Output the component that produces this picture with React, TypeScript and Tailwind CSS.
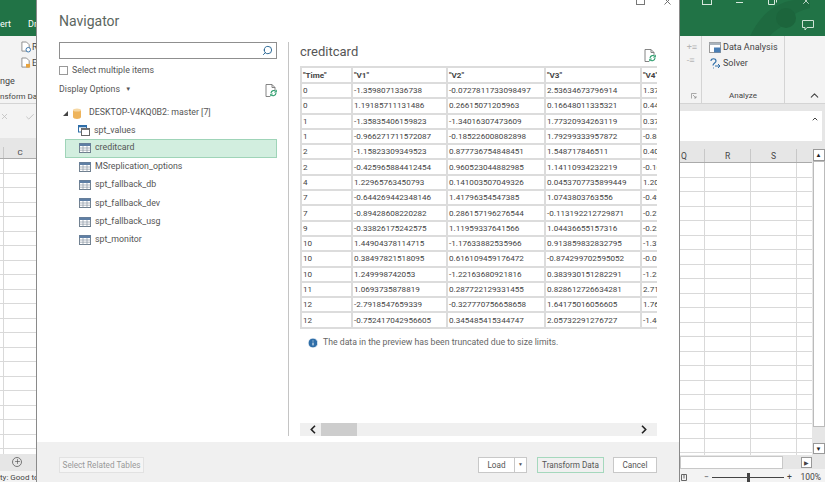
import { ReactNode } from "react";
import { ChevronUp, X, Check, Plus, Search, Info } from "lucide-react";

const font = "font-['Roboto','Noto_Sans',sans-serif]";

const columns = [
  { name: '"Time"', width: "w-[51px]" },
  { name: '"V1"', width: "w-[95px]" },
  { name: '"V2"', width: "w-[98px]" },
  { name: '"V3"', width: "w-[96px]" },
  { name: '"V4"', width: "w-[40px]" },
];

const rows = [
  ["0", "-1.3598071336738", "-0.0727811733098497", "2.53634673796914", "1.378"],
  ["0", "1.19185711131486", "0.26615071205963", "0.16648011335321", "0.448"],
  ["1", "-1.35835406159823", "-1.34016307473609", "1.77320934263119", "0.379"],
  ["1", "-0.966271711572087", "-0.185226008082898", "1.79299333957872", "-0.863"],
  ["2", "-1.15823309349523", "0.877736754848451", "1.548717846511", "0.403"],
  ["2", "-0.425965884412454", "0.960523044882985", "1.14110934232219", "-0.168"],
  ["4", "1.22965763450793", "0.141003507049326", "0.0453707735899449", "1.202"],
  ["7", "-0.644269442348146", "1.41796354547385", "1.0743803763556", "-0.492"],
  ["7", "-0.89428608220282", "0.286157196276544", "-0.113192212729871", "-0.271"],
  ["9", "-0.33826175242575", "1.11959337641566", "1.04436655157316", "-0.227"],
  ["10", "1.44904378114715", "-1.17633882535966", "0.913859832832795", "-1.378"],
  ["10", "0.38497821518095", "0.616109459176472", "-0.874299702595052", "-0.094"],
  ["10", "1.249998742053", "-1.22163680921816", "0.383930151282291", "-1.235"],
  ["11", "1.0693735878819", "0.287722129331455", "0.828612726634281", "2.716"],
  ["12", "-2.7918547659339", "-0.327770756658658", "1.64175016056605", "1.768"],
  ["12", "-0.752417042956605", "0.345485415344747", "2.05732291276727", "-1.466"],
];

const tables = ["creditcard", "MSreplication_options", "spt_fallback_db", "spt_fallback_dev", "spt_fallback_usg", "spt_monitor"];

function TableIcon() {
  return (
    <svg width="12" height="10" viewBox="0 0 12 10" className="shrink-0">
      <rect x="0.5" y="0.5" width="11" height="9" fill="#fff" stroke="#6f7f8f" />
      <rect x="0.5" y="0.5" width="11" height="2.5" fill="#5f7fa5" />
      <path d="M4 3v6.5M8 3v6.5M0.5 5h11M0.5 7.2h11" stroke="#8a96a3" strokeWidth="0.7" />
    </svg>
  );
}

function ViewIcon() {
  return (
    <svg width="12" height="11" viewBox="0 0 12 11" className="shrink-0">
      <rect x="0.5" y="0.5" width="8" height="6.5" fill="#fff" stroke="#2f6ea8" />
      <rect x="0.5" y="0.5" width="8" height="1.8" fill="#2f6ea8" />
      <rect x="3.5" y="3.5" width="8" height="7" fill="#fff" stroke="#666" />
      <rect x="3.5" y="3.5" width="8" height="1.5" fill="#777" />
    </svg>
  );
}

function RefreshDoc() {
  return (
    <svg width="12" height="13" viewBox="0 0 12 13">
      <path d="M1 .5h6l3 3v3M7 .5v3h3M5 12.5H1V.5" fill="none" stroke="#777" strokeWidth="0.9" />
      <path d="M11 9a2.8 2.8 0 0 1-5 1.6M6 9a2.8 2.8 0 0 1 5-1.4" fill="none" stroke="#2f9e6e" strokeWidth="1.1" />
      <path d="M11.5 5.8v2.4H9.2M5.6 12.4V10h2.3" fill="none" stroke="#2f9e6e" strokeWidth="0.8" />
    </svg>
  );
}

function GridRows({ count, children }: { count: number; children: ReactNode }) {
  return (
    <div className="flex flex-col flex-1 overflow-hidden bg-white">
      {Array.from({ length: count }).map((_, i) => (
        <div key={i} className="flex h-[14.5px] shrink-0 border-b border-[#d9d9d9]">
          {children}
        </div>
      ))}
    </div>
  );
}

function LeftExcel() {
  return (
    <div className="w-[36px] shrink-0 flex flex-col overflow-hidden bg-[#e6e6e6] text-[#444]">
      <div className="h-[36px] bg-[#217346] flex items-end justify-between pb-[5px] text-white text-[9px] whitespace-nowrap">
        <span>ert</span>
        <span className="-mr-[1px]">Dr</span>
      </div>
      <div className="h-[68px] bg-[#f3f3f3] flex flex-col items-end whitespace-nowrap border-b border-[#d4d4d4]">
        <div className="w-full pl-[21px] pt-[5px] flex flex-col gap-[4px]">
          <div className="flex items-center gap-[1px]">
            <svg width="10" height="12" viewBox="0 0 11 12" className="shrink-0">
              <path d="M1 .5h5l3 3v7H1z" fill="#fff" stroke="#888" />
              <circle cx="8" cy="9" r="2.5" fill="#fff" stroke="#2f6ea8" />
            </svg>
            <span className="text-[9px] leading-[12px]">R</span>
          </div>
          <div className="flex items-center gap-[1px]">
            <svg width="10" height="12" viewBox="0 0 11 12" className="shrink-0">
              <path d="M1 .5h5l3 3v7H1z" fill="#fff" stroke="#888" />
              <rect x="5.5" y="7" width="4.5" height="4" fill="#e8a33d" />
            </svg>
            <span className="text-[9px] leading-[12px]">E</span>
          </div>
        </div>
        <div className="w-full text-[9px] leading-[12px] mt-[6px]">nge</div>
        <div className="w-full text-[8px] leading-[10px] mt-[5px]">nsform Da</div>
      </div>
      <div className="h-[34px] flex items-start pt-[8px] bg-[#f3f3f3] text-[#bbb]">
        <X size={9} />
        <Check size={10} className="ml-[16px]" />
      </div>
      <div className="h-[10px] bg-[#e6e6e6]" />
      <div className="h-[12px] -mt-[1px] flex bg-[#e6e6e6] border-b border-[#aaa] text-[8px] leading-[12px]">
        <div className="w-[4px] border-r border-[#c8c8c8]" />
        <div className="flex-1 text-center">C</div>
      </div>
      <GridRows count={21}>
        <div className="w-[4px] border-r border-[#d9d9d9]" />
      </GridRows>
      <div className="h-[17px] bg-[#e6e6e6] flex items-center justify-end pr-[14px] pb-[2px]">
        <div className="w-[10px] h-[10px] rounded-full border border-[#777] flex items-center justify-center">
          <Plus size={7} />
        </div>
      </div>
      <div className="h-[11px] bg-[#f3f3f3] text-[8px] leading-[13px] whitespace-nowrap">ty: Good to</div>
    </div>
  );
}

function RightExcel() {
  return (
    <div className="w-[146px] shrink-0 flex flex-col overflow-hidden bg-[#e6e6e6] text-[#444] border-l border-[#8a8a8a]">
      <div className="h-[36px] bg-[#217346] relative overflow-hidden text-white">
        <svg width="60" height="36" viewBox="0 0 60 36" className="absolute left-[70px] top-0">
          <path d="M0 36C8 20 20 4 44 0h16v8c-10 2-20 8-24 14-4 6-12 8-16 14z" fill="#1e6a40" />
          <circle cx="36" cy="18" r="10" fill="#1c653c" />
        </svg>
        <div className="relative flex justify-between pl-[22px] pr-[14px] -mt-[4px] items-start">
          <svg width="10" height="9" viewBox="0 0 10 9"><rect x=".5" y=".5" width="9" height="8" fill="none" stroke="#d7e8dd" /></svg>
          <div className="w-[7px] h-[1px] bg-[#d7e8dd] mt-[6px]" />
          <svg width="9" height="9" viewBox="0 0 9 9"><path d="M2 .5h6.5v6M.5 2.5h6v6h-6z" fill="none" stroke="#d7e8dd" /></svg>
          <X size={10} className="text-[#d7e8dd]" />
        </div>
        <svg width="12" height="11" viewBox="0 0 12 11" className="absolute right-[11px] top-[20px]">
          <path d="M.5.5h11v7H5L3 10V7.5H.5z" fill="none" stroke="#cfe3d6" />
        </svg>
      </div>
      <div className="h-[68px] bg-[#f3f3f3] flex border-b border-[#d4d4d4]">
        <div className="w-[22px] border-r border-[#d4d4d4] flex flex-col justify-between items-end pr-[4px] pt-[5px] pb-[4px] text-[#b5b5b5] text-[9px] leading-[13px]">
          <div className="flex flex-col">
            <span>+≡</span>
            <span>-≡</span>
          </div>
          <svg width="6" height="6" viewBox="0 0 6 6"><path d="M.5 5.5v-5h5M2 2l3 3M5 3v2H3" fill="none" stroke="#888" strokeWidth="0.7" /></svg>
        </div>
        <div className="w-[83px] border-r border-[#d4d4d4] flex flex-col pl-[7px] pt-[3px]">
          <div className="flex items-center gap-[2px] text-[9px] leading-[16px] whitespace-nowrap">
            <svg width="12" height="11" viewBox="0 0 12 11" className="shrink-0">
              <rect x=".5" y=".5" width="11" height="10" fill="#fff" stroke="#999" />
              <rect x=".5" y=".5" width="11" height="2.5" fill="#aab4bd" />
              <rect x="5" y="5.5" width="6.5" height="5" fill="#4a7fb5" />
            </svg>
            Data Analysis
          </div>
          <div className="flex items-center gap-[2px] text-[9px] leading-[16px] pl-[1px]">
            <svg width="11" height="11" viewBox="0 0 11 11" className="shrink-0">
              <path d="M1 3c0-3 5-3 5 0 0 2-3 2-3 4.500M3 10h.8" fill="none" stroke="#2f6ea8" strokeWidth="1.2" />
              <path d="M5 8h5M8 6l2 2-2 2" fill="none" stroke="#2f6ea8" strokeWidth="1" />
            </svg>
            Solver
          </div>
          <div className="mt-auto mb-[1px] pr-[7px] text-center text-[8px] leading-[12px]">Analyze</div>
        </div>
        <div className="flex-1 flex items-end justify-end pr-[4px] pb-[1px]">
          <ChevronUp size={13} />
        </div>
      </div>
      <div className="h-[7px]" />
      <div className="h-[30px] bg-white mr-[3px] flex justify-end pr-[3px] pt-[4px]">
        <ChevronUp size={8} strokeWidth={3} />
      </div>
      <div className="h-[8px]" />
      <div className="flex flex-1 min-h-0">
        <div className="flex-1 flex flex-col min-w-0">
          <div className="h-[14px] flex bg-[#e6e6e6] border-b border-[#aaa] text-[8.5px] leading-[14px] text-center">
            <div className="w-[25px] border-r border-[#c8c8c8] text-left pl-[1px]">Q</div>
            <div className="w-[46px] border-r border-[#c8c8c8]">R</div>
            <div className="w-[46px] border-r border-[#c8c8c8]">S</div>
            <div className="flex-1" />
          </div>
          <GridRows count={21}>
            <div className="w-[25px] border-r border-[#d9d9d9]" />
            <div className="w-[46px] border-r border-[#d9d9d9]" />
            <div className="w-[46px] border-r border-[#d9d9d9]" />
          </GridRows>
        </div>
        <div className="w-[13px] shrink-0 flex flex-col items-center text-[#222] text-[6px] leading-[10px]">
          <div className="w-[12px] h-[12px] bg-white border border-[#999] text-center">▲</div>
          <div className="w-[12px] h-[266px] bg-white border border-[#bbb]" />
          <div className="flex-1" />
          <div className="w-[12px] h-[11px] mb-[1px] bg-white border border-[#999] text-center">▼</div>
        </div>
      </div>
      <div className="h-[14px] flex items-center pr-[13px]">
        <div className="w-[103px] h-[13px] bg-white border border-[#c8c8c8]" />
        <div className="w-[11px] h-[11px] ml-auto bg-white border border-[#999] text-center text-[6px] leading-[9px]">▶</div>
      </div>
      <div className="h-[13px] flex items-center bg-[#f3f3f3] text-[8.5px] pl-[1px] pr-[4px] pt-[3px]">
        <svg width="6" height="7" viewBox="0 0 6 7"><path d="M.5.5h5v6h-5zM3 .5v4" fill="none" stroke="#666" /></svg>
        <span className="ml-[17px]">−</span>
        <div className="ml-[3px] w-[72px] h-[1px] bg-[#444] relative">
          <div className="absolute left-[35px] -top-[4px] w-[3px] h-[9px] bg-[#444]" />
        </div>
        <span className="ml-[3px]">+</span>
        <span className="ml-auto">100%</span>
      </div>
    </div>
  );
}

function TreePane() {
  return (
    <div className="w-[240px] shrink-0 pl-[22px] flex flex-col text-[8.8px] text-[#555]">
      <div className="h-[17px] border border-[#8f8f8f] bg-white flex items-center justify-end pr-[3px]">
        <Search size={11} className="text-[#1f5f8f] -scale-x-100" />
      </div>
      <div className="flex items-center gap-[4px] mt-[6px] h-[11px]">
        <div className="w-[9px] h-[9px] border border-[#999] bg-white" />
        <span>Select multiple items</span>
      </div>
      <div className="flex items-center mt-[7px] h-[14px] justify-between">
        <span>
          Display Options <span className="ml-[3px] text-[6px] align-[1px]">▼</span>
        </span>
        <RefreshDoc />
      </div>
      <div className="flex items-center mt-[7px] h-[18px] pl-[4px] gap-[5px]">
        <div className="w-0 h-0 border-l-[5px] border-l-transparent border-b-[5px] border-b-[#444]" />
        <svg width="8" height="11" viewBox="0 0 8 11" className="shrink-0">
          <path d="M0 2v7c0 2.5 8 2.5 8 0V2z" fill="#eeb45c" />
          <ellipse cx="4" cy="2" rx="4" ry="1.600" fill="#f6d8a4" />
        </svg>
        <span className="ml-[3px] whitespace-nowrap">DESKTOP-V4KQ0B2: master [7]</span>
      </div>
      <div className="flex items-center h-[16.5px] pl-[19px] gap-[4px]">
        <ViewIcon />
        <span>spt_values</span>
      </div>
      {tables.map((name, i) => (
        <div
          key={name}
          className={
            i === 0
              ? "flex items-center h-[19px] ml-[6px] pl-[13px] gap-[4px] bg-[#d2eedf] border border-[#9fd4b8]"
              : "flex items-center h-[18.3px] ml-[6px] pl-[14px] gap-[4px]"
          }
        >
          <TableIcon />
          <span>{name}</span>
        </div>
      ))}
    </div>
  );
}

function PreviewPane() {
  return (
    <div className="w-[369px] ml-[11px] h-[394px] border-l border-[#c4c4c4] pl-[11px] flex flex-col">
      <div className="flex items-center justify-between h-[24px] pr-[1px]">
        <span className="text-[13px] leading-[20px] text-[#555] -mt-[5px]">creditcard</span>
        <div className="mt-[2px]"><RefreshDoc /></div>
      </div>
      <div className="w-[357px] overflow-hidden">
        <table className="table-fixed border-collapse w-[380px] text-[8.1px] text-[#444]">
          <thead>
            <tr className="h-[16px] bg-white">
              {columns.map((col) => (
                <th key={col.name} className={`${col.width} border-2 border-[#dcdcdc] text-left font-bold pl-[1px] py-0 leading-[12px]`}>
                  {col.name}
                </th>
              ))}
            </tr>
          </thead>
          <tbody>
            {rows.map((row, i) => (
              <tr key={i} className="h-[15.3px]">
                {row.map((cell, j) => (
                  <td key={j} className="border-2 border-[#dcdcdc] pl-[1px] py-0 leading-[11px] whitespace-nowrap overflow-hidden">
                    {cell}
                  </td>
                ))}
              </tr>
            ))}
          </tbody>
        </table>
      </div>
      <div className="flex items-center gap-[4px] mt-[7px] pl-[7px] h-[14px]">
        <Info size={12} className="text-white fill-[#2f6ea8]" />
        <span className="text-[8.7px] text-[#666]">The data in the preview has been truncated due to size limits.</span>
      </div>
      <div className="mt-auto w-[357px] h-[13px] bg-[#f0f0f0] flex items-center justify-between px-[10px] text-[#222]">
        <svg width="6" height="9" viewBox="0 0 6 9"><path d="M5 .8 1.300 4.500 5 8.200" fill="none" stroke="#222" strokeWidth="1.6" /></svg>
        <div className="w-[36px] h-[13px] bg-[#cdcdcd] mr-auto ml-[5px]" />
        <svg width="6" height="9" viewBox="0 0 6 9"><path d="M1 .8l3.700 3.700L1 8.200" fill="none" stroke="#222" strokeWidth="1.6" /></svg>
      </div>
    </div>
  );
}

function Dialog() {
  return (
    <div className="w-[643px] shrink-0 flex flex-col bg-white border-l border-[#8a8a8a]">
      <div className="h-[42px] relative pl-[22px] pt-[11px] text-[14px] leading-[20px] text-[#5b6660]">
        Navigator
        <div className="absolute right-[34px] -top-[4px] w-[9px] h-[9px] border border-[#777]" />
        <X size={11} className="absolute right-[6px] -top-[4px] text-[#666]" />
      </div>
      <div className="flex flex-1">
        <TreePane />
        <PreviewPane />
      </div>
      <div className="h-[40px] bg-[#f0f0f0] flex items-center pl-[22px] pr-[22px] pt-[6px] text-[8.2px] whitespace-nowrap">
        <button className="h-[16px] w-[85px] bg-[#f5f5f5] border border-[#e2e2e2] text-[#999]">Select Related Tables</button>
        <button className="ml-auto h-[16px] w-[37px] bg-white border border-[#c8c8c8] text-[#555]">Load</button>
        <button className="h-[16px] w-[13px] -ml-[1px] bg-white border border-[#c8c8c8] text-[#555] text-[5px]">▼</button>
        <button className="ml-[10px] h-[16px] w-[67px] bg-[#f0f0f0] border border-[#a5d8bd] text-[#555]">Transform Data</button>
        <button className="ml-[9px] h-[16px] w-[44px] bg-white border border-[#c8c8c8] text-[#555]">Cancel</button>
      </div>
    </div>
  );
}

export default function App() {
  return (
    <div className={`${font} w-[825px] h-[482px] flex overflow-hidden`}>
      <LeftExcel />
      <Dialog />
      <RightExcel />
    </div>
  );
}
